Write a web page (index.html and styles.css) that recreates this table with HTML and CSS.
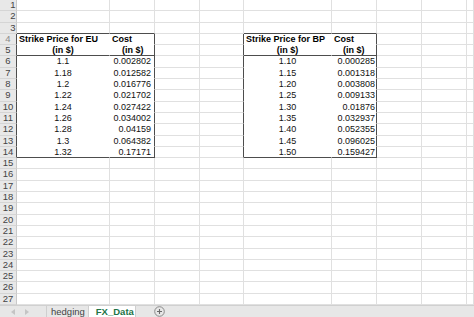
FILE: index.html
```html
<!DOCTYPE html>
<html>
<head>
<meta charset="utf-8">
<link rel="stylesheet" href="styles.css">
</head>
<body>
<div class="sheet">
  <div class="rh o">1</div><div></div><div></div><div></div><div></div><div></div><div></div><div></div><div></div><div></div>
  <div class="rh o">2</div><div></div><div></div><div></div><div></div><div></div><div></div><div></div><div></div><div></div>
  <div class="rh o">3</div><div class="bt"></div><div class="bt"></div><div></div><div></div><div class="bt"></div><div class="bt"></div><div></div><div></div><div></div>

  <div class="rh tl dim">4</div><div class="in l b">Strike Price for EU</div><div class="in last l b">Cost</div><div></div><div class="rt"></div><div class="in l b">Strike Price for BP</div><div class="in last l b">Cost</div><div></div><div></div><div></div>
  <div class="rh tl">5</div><div class="in bt c b">(in $)</div><div class="in last bt l b ind">(in $)</div><div></div><div class="rt"></div><div class="in bt c b">(in $)</div><div class="in last bt l b ind2">(in $)</div><div></div><div></div><div></div>

  <div class="rh tl">6</div><div class="in c">1.1</div><div class="in last r">0.002802</div><div></div><div class="rt"></div><div class="in c">1.10</div><div class="in last r2">0.000285</div><div></div><div></div><div></div>
  <div class="rh tl">7</div><div class="in c">1.18</div><div class="in last r">0.012582</div><div></div><div class="rt"></div><div class="in c">1.15</div><div class="in last r2">0.001318</div><div></div><div></div><div></div>
  <div class="rh tl">8</div><div class="in c">1.2</div><div class="in last r">0.016776</div><div></div><div class="rt"></div><div class="in c">1.20</div><div class="in last r2">0.003808</div><div></div><div></div><div></div>
  <div class="rh tl">9</div><div class="in c">1.22</div><div class="in last r">0.021702</div><div></div><div class="rt"></div><div class="in c">1.25</div><div class="in last r2">0.009133</div><div></div><div></div><div></div>
  <div class="rh tl">10</div><div class="in c">1.24</div><div class="in last r">0.027422</div><div></div><div class="rt"></div><div class="in c">1.30</div><div class="in last r2">0.01876</div><div></div><div></div><div></div>
  <div class="rh tl">11</div><div class="in c">1.26</div><div class="in last r">0.034002</div><div></div><div class="rt"></div><div class="in c">1.35</div><div class="in last r2">0.032937</div><div></div><div></div><div></div>
  <div class="rh tl">12</div><div class="in c">1.28</div><div class="in last r">0.04159</div><div></div><div class="rt"></div><div class="in c">1.40</div><div class="in last r2">0.052355</div><div></div><div></div><div></div>
  <div class="rh tl">13</div><div class="in c">1.3</div><div class="in last r">0.064382</div><div></div><div class="rt"></div><div class="in c">1.45</div><div class="in last r2">0.096025</div><div></div><div></div><div></div>
  <div class="rh tl">14</div><div class="in bt c">1.32</div><div class="in last bt r">0.17171</div><div></div><div class="rt"></div><div class="in bt c">1.50</div><div class="in last bt r2">0.159427</div><div></div><div></div><div></div>

  <div class="rh">15</div><div></div><div></div><div></div><div></div><div></div><div></div><div></div><div></div><div></div>
  <div class="rh">16</div><div></div><div></div><div></div><div></div><div></div><div></div><div></div><div></div><div></div>
  <div class="rh">17</div><div></div><div></div><div></div><div></div><div></div><div></div><div></div><div></div><div></div>
  <div class="rh">18</div><div></div><div></div><div></div><div></div><div></div><div></div><div></div><div></div><div></div>
  <div class="rh">19</div><div></div><div></div><div></div><div></div><div></div><div></div><div></div><div></div><div></div>
  <div class="rh">20</div><div></div><div></div><div></div><div></div><div></div><div></div><div></div><div></div><div></div>
  <div class="rh">21</div><div></div><div></div><div></div><div></div><div></div><div></div><div></div><div></div><div></div>
  <div class="rh">22</div><div></div><div></div><div></div><div></div><div></div><div></div><div></div><div></div><div></div>
  <div class="rh">23</div><div></div><div></div><div></div><div></div><div></div><div></div><div></div><div></div><div></div>
  <div class="rh">24</div><div></div><div></div><div></div><div></div><div></div><div></div><div></div><div></div><div></div>
  <div class="rh">25</div><div></div><div></div><div></div><div></div><div></div><div></div><div></div><div></div><div></div>
  <div class="rh">26</div><div></div><div></div><div></div><div></div><div></div><div></div><div></div><div></div><div></div>
  <div class="rh">27</div><div></div><div></div><div></div><div></div><div></div><div></div><div></div><div></div><div></div>
</div>
<div class="tabbar">
  <div class="nav">
    <svg width="5" height="6" viewBox="0 0 5 6"><path d="M4 0 L0 3 L4 6 Z" fill="#c4c4c4"/></svg>
    <svg width="5" height="6" viewBox="0 0 5 6"><path d="M1 0 L5 3 L1 6 Z" fill="#c4c4c4"/></svg>
  </div>
  <div class="tab">hedging</div>
  <div class="tab active">FX_Data</div>
  <div class="add">
    <svg width="11" height="11" viewBox="0 0 11 11"><circle cx="5.5" cy="5.5" r="4.8" fill="none" stroke="#8a8a8a" stroke-width="1"/><path d="M5.5 3 V8 M3 5.5 H8" stroke="#6a6a6a" stroke-width="1.1"/></svg>
  </div>
</div>
</body>
</html>
```
FILE: styles.css
```css
html, body {
  margin: 0;
  padding: 0;
  background: #ffffff;
  overflow: hidden;
}
body {
  width: 474px;
  height: 317px;
  font-family: "Liberation Sans", Arial, sans-serif;
  font-size: 9px;
  color: #111;
}
.sheet {
  display: grid;
  grid-template-columns: 17px 93px 45px 45px 44px 88px 45px 45px 45px 7px;
  grid-auto-rows: 11.3px;
  height: 305px;
}
.sheet > div {
  box-sizing: border-box;
  border-right: 1px solid #e0e0e0;
  border-bottom: 1px solid #e0e0e0;
  line-height: 10.3px;
  white-space: nowrap;
  overflow: visible;
}
.sheet > .rh {
  background: #e8e8e8;
  color: #444;
  text-align: center;
  border-right: 1px solid #c9c9c9;
  border-bottom: 1px solid #d5d5d5;
  font-size: 9.5px;
}
.sheet > .rh.o {
  padding-left: 10px;
}
.sheet > .rh.dim {
  color: #8a8a8a;
}
.sheet > .rh.tl {
  border-right: 1px solid #4d4d4d;
}
.sheet > .in {
  background: #ffffff;
  border-right-color: #ffffff;
  border-bottom-color: #ffffff;
}
.sheet > .last {
  border-right-color: #4d4d4d;
}
.sheet > .bt {
  border-bottom-color: #4d4d4d;
}
.sheet > .rt {
  border-right-color: #4d4d4d;
}
.l { padding-left: 2px; text-align: left; }
.c { text-align: center; }
.r { text-align: right; padding-right: 3px; }
.r2 { text-align: right; padding-right: 1px; }
.b { font-weight: bold; color: #000; }
.sheet > .ind { padding-left: 12px; }
.sheet > .ind2 { padding-left: 11px; }

.tabbar {
  display: flex;
  align-items: stretch;
  height: 12px;
  background: #e7e7e7;
  border-top: 1px solid #d0d0d0;
  box-sizing: border-box;
}
.nav {
  width: 47px;
  display: flex;
  align-items: center;
  gap: 8px;
  padding-left: 11px;
  box-sizing: border-box;
  border-right: 1px solid #cfcfcf;
}
.tab {
  padding: 0 3px 0 4px;
  color: #444;
  font-size: 9.5px;
  line-height: 11px;
  border-right: 1px solid #cfcfcf;
}
.tab.active {
  background: #ffffff;
  color: #217346;
  font-weight: bold;
  width: 47px;
  box-sizing: border-box;
  padding-left: 7px;
}
.add {
  display: flex;
  align-items: center;
  padding-left: 18px;
}
```
